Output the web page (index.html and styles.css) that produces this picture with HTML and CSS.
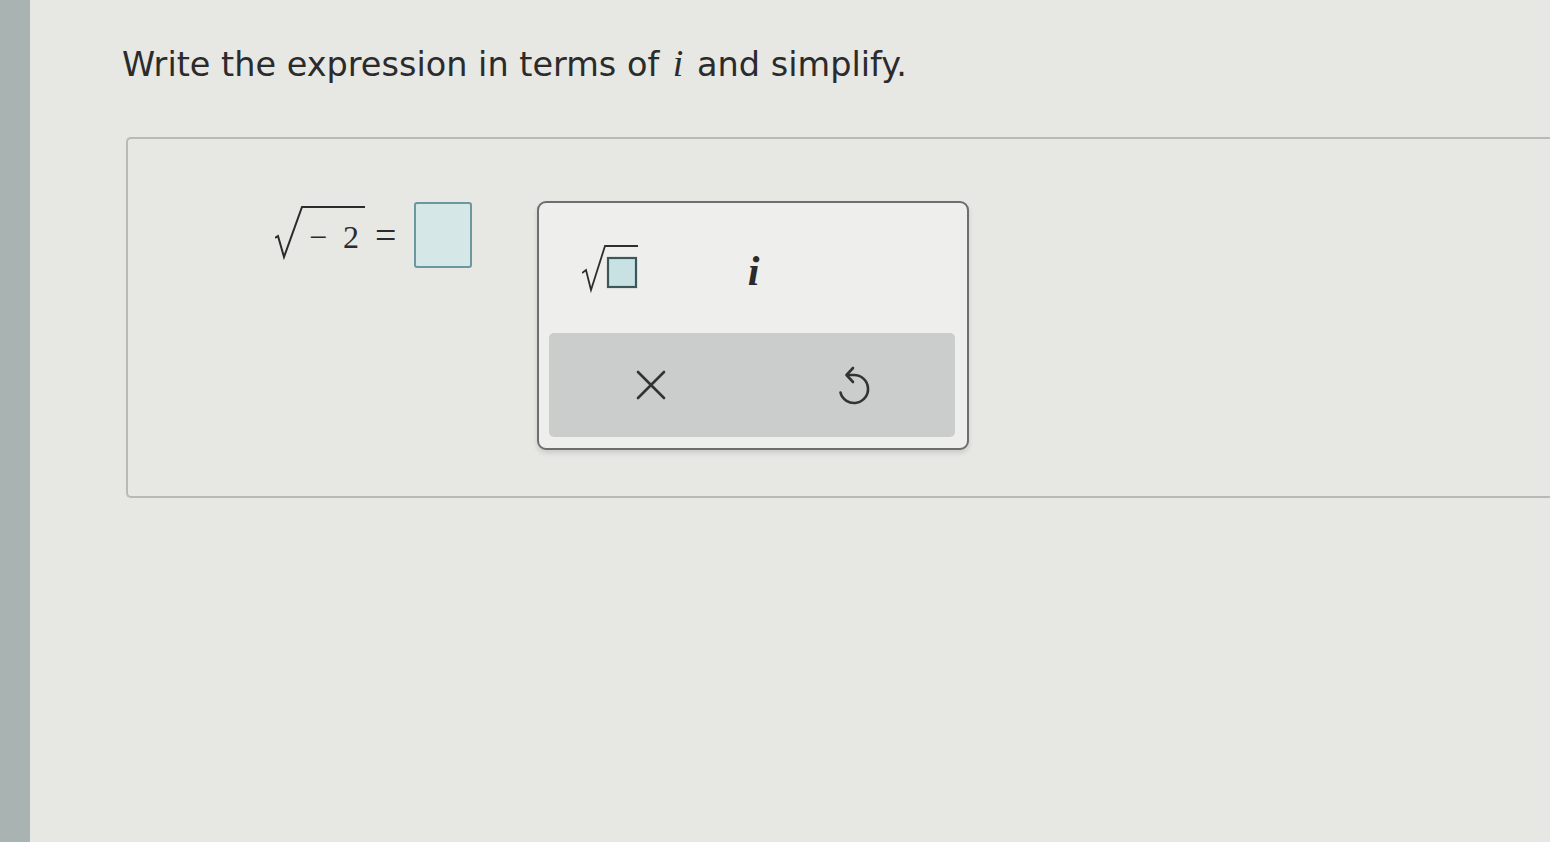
FILE: index.html
```html
<!DOCTYPE html>
<html lang="en">
<head>
<meta charset="utf-8">
<title>Write the expression in terms of i</title>
<link rel="stylesheet" href="styles.css">
</head>
<body>
<div class="page">
  <div class="sidebar"></div>
  <main class="main">
    <h1 class="prompt">Write the expression in terms of <span class="mvar">i</span> and simplify.</h1>
    <section class="problem">
      <div class="equation">
        <svg class="radical" width="28" height="56" viewBox="0 0 28 56" aria-hidden="true">
          <path d="M0 34 L3 32 L9 53 L27 3 L28 3" fill="none" stroke="#2b2b2b" stroke-width="2" stroke-linejoin="miter"/>
        </svg>
        <span class="radicand"><span class="minus">&minus;</span>2</span>
        <span class="equals">=</span>
        <span class="answer-box"></span>
      </div>
      <div class="palette">
        <div class="palette-top">
          <button class="key key-sqrt" type="button" aria-label="square root">
            <svg width="58" height="50" viewBox="0 0 58 50" aria-hidden="true">
              <path d="M0 30 L4 27 L9 47 L23 3 L56 3" fill="none" stroke="#2e2e2e" stroke-width="1.8"/>
              <rect x="26" y="15" width="28" height="29" fill="#c8e2e4" stroke="#3c575c" stroke-width="2.2"/>
            </svg>
          </button>
          <button class="key key-i" type="button">i</button>
        </div>
        <div class="palette-bar">
          <button class="tool" type="button" aria-label="clear">
            <svg width="30" height="30" viewBox="0 0 30 30" aria-hidden="true">
              <path d="M2 2 L28 28 M28 2 L2 28" stroke="#333" stroke-width="2.6" stroke-linecap="round"/>
            </svg>
          </button>
          <button class="tool" type="button" aria-label="undo">
            <svg width="34" height="42" viewBox="0 0 34 42" aria-hidden="true">
              <path d="M10 11 L17 11 A14 14 0 1 1 3.5 28.6" fill="none" stroke="#333" stroke-width="2.6" stroke-linecap="round"/>
              <path d="M16 4 L9.5 11 L16 18" fill="none" stroke="#333" stroke-width="2.6" stroke-linecap="round" stroke-linejoin="round"/>
            </svg>
          </button>
        </div>
      </div>
    </section>
  </main>
</div>
</body>
</html>
```
FILE: styles.css
```css
html, body {
  margin: 0;
  padding: 0;
}

body {
  background: #e7e7e4;
  font-family: "DejaVu Sans", Verdana, sans-serif;
  color: #2a2a2a;
  overflow: hidden;
}

.page {
  display: flex;
  width: 1550px;
  height: 842px;
  overflow: hidden;
}

.sidebar {
  flex: 0 0 30px;
  background: #a9b3b2;
}

.main {
  flex: 1;
  min-width: 0;
  padding-left: 92px;
  padding-top: 43px;
}

.prompt {
  margin: 0;
  font-weight: normal;
  font-size: 33.5px;
  line-height: 40px;
  color: #2b2b2b;
  white-space: nowrap;
}

.mvar {
  font-family: "Liberation Serif", "Times New Roman", serif;
  font-style: italic;
  font-size: 38px;
  padding: 0 3px;
}

.problem {
  margin-top: 52px;
  margin-left: 4px;
  width: 1460px;
  height: 361px;
  box-sizing: border-box;
  border: 2px solid #b9b9b7;
  border-right: none;
  border-radius: 5px 0 0 5px;
  display: flex;
  align-items: flex-start;
  padding: 63px 0 0 147px;
}

.equation {
  display: flex;
  align-items: flex-start;
  font-family: "Liberation Serif", "Times New Roman", serif;
  font-size: 32px;
  color: #2b2b2b;
}

.radical {
  display: block;
  margin-top: 2px;
}

.radicand {
  margin-top: 4px;
  border-top: 2px solid #2b2b2b;
  padding: 13px 6px 0 6px;
  line-height: 32px;
  display: flex;
}

.minus {
  margin-right: 16px;
}

.equals {
  margin-top: 14px;
  margin-left: 10px;
  font-size: 38px;
  line-height: 38px;
}

.answer-box {
  margin-left: 18px;
  width: 58px;
  height: 66px;
  box-sizing: border-box;
  border: 2px solid #6b989e;
  border-radius: 3px;
  background: #d6e7e8;
}

.palette {
  margin-left: 65px;
  margin-top: -1px;
  width: 432px;
  height: 249px;
  box-sizing: border-box;
  border: 2px solid #6e6e6e;
  border-radius: 9px;
  background: #eeeeec;
  box-shadow: 0 3px 5px rgba(0, 0, 0, 0.12);
  padding: 10px 12px 11px 10px;
  display: flex;
  flex-direction: column;
}

.palette-top {
  display: grid;
  grid-template-columns: 124px 160px;
  height: 110px;
  margin-bottom: 10px;
}

.key {
  border: none;
  background: transparent;
  padding: 0;
  display: flex;
  align-items: center;
  justify-content: center;
  cursor: pointer;
}

.key-sqrt svg {
  display: block;
}

.key-i {
  font-family: "Liberation Serif", "Times New Roman", serif;
  font-style: italic;
  font-weight: bold;
  font-size: 42px;
  color: #2b2b2b;
  padding-top: 6px;
}

.palette-bar {
  flex: 1;
  background: #cbcdcc;
  border-radius: 5px;
  display: grid;
  grid-template-columns: 1fr 1fr;
}

.tool {
  border: none;
  background: transparent;
  padding: 0;
  display: flex;
  align-items: center;
  justify-content: center;
  cursor: pointer;
}

.tool svg {
  display: block;
}
```
